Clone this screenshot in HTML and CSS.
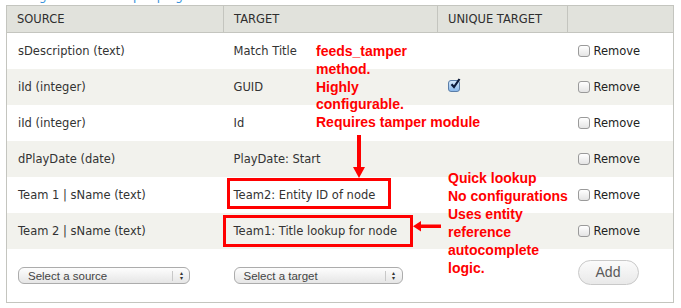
FILE: index.html
```html
<!DOCTYPE html>
<html lang="en">
<head>
  <meta charset="UTF-8" />
  <title>Mapping</title>
  <link rel="stylesheet" href="styles.css">
</head>
<body>
  <div class="page">
    <p class="top-link"><a href="#">Configure Feeds Tamper plugins</a></p>

    <table class="mapping">
      <thead>
        <tr>
          <th class="col-source">SOURCE</th>
          <th class="col-target">TARGET</th>
          <th class="col-unique">UNIQUE TARGET</th>
          <th class="col-remove"></th>
        </tr>
      </thead>
      <tbody>
        <tr>
          <td>sDescription (text)</td>
          <td>Match Title</td>
          <td></td>
          <td><label class="remove"><span class="check"></span>Remove</label></td>
        </tr>
        <tr class="even">
          <td>iId (integer)</td>
          <td>GUID</td>
          <td><span class="check checked"><svg width="12" height="12" viewBox="0 0 12 12"><path d="M2.5 6.2 L5 9 L10.5 1" fill="none" stroke="#0b1a3a" stroke-width="2.2"/></svg></span></td>
          <td><label class="remove"><span class="check"></span>Remove</label></td>
        </tr>
        <tr>
          <td>iId (integer)</td>
          <td>Id</td>
          <td></td>
          <td><label class="remove"><span class="check"></span>Remove</label></td>
        </tr>
        <tr class="even">
          <td>dPlayDate (date)</td>
          <td>PlayDate: Start</td>
          <td></td>
          <td><label class="remove"><span class="check"></span>Remove</label></td>
        </tr>
        <tr>
          <td>Team 1 | sName (text)</td>
          <td>Team2: Entity ID of node</td>
          <td></td>
          <td><label class="remove"><span class="check"></span>Remove</label></td>
        </tr>
        <tr class="even">
          <td>Team 2 | sName (text)</td>
          <td>Team1: Title lookup for node</td>
          <td></td>
          <td><label class="remove"><span class="check"></span>Remove</label></td>
        </tr>
        <tr class="add-row">
          <td><div class="select select-source"><span>Select a source</span><i>&#x25B4;<br>&#x25BE;</i></div></td>
          <td><div class="select select-target"><span>Select a target</span><i>&#x25B4;<br>&#x25BE;</i></div></td>
          <td></td>
          <td><button class="add-btn">Add</button></td>
        </tr>
      </tbody>
    </table>

    <!-- annotations drawn over the screenshot -->
    <div class="note note-tamper">feeds_tamper<br>method.<br>Highly<br>configurable.<br>Requires tamper module</div>
    <div class="note note-lookup">Quick lookup<br>No configurations<br>Uses entity<br>reference<br>autocomplete<br>logic.</div>
    <div class="red-box box-one"></div>
    <div class="red-box box-two"></div>
    <svg class="arrows" width="681" height="308" viewBox="0 0 681 308">
      <rect x="357" y="135" width="4" height="33" fill="#f00"/>
      <polygon points="353,167 365,167 359,178" fill="#f00"/>
      <rect x="420" y="224.5" width="21" height="3.5" fill="#f00"/>
      <polygon points="421,221 421,231.5 413,226.2" fill="#f00"/>
    </svg>
  </div>
</body>
</html>
```

FILE: styles.css
```css
body {
  margin: 0;
  font-family: 'DejaVu Sans', Verdana, sans-serif;
  font-size: 11.5px;
  color: #333;
  background: #fff;
}

.page {
  position: relative;
  width: 681px;
  height: 308px;
  overflow: hidden;
  padding: 5px 0 0 6px;
  box-sizing: border-box;
}

.top-link {
  margin: -15px 0 0 2px;
  height: 15px;
  line-height: 13px;
  font-size: 12px;
}

.top-link a {
  color: #3a93da;
  text-decoration: none;
}

.mapping {
  border-collapse: collapse;
  border: 1px solid #c4c5bf;
  table-layout: fixed;
  width: 668px;
}

.mapping th {
  background: #e1e2dc;
  height: 26px;
  padding: 0 0 0 10px;
  font-weight: normal;
  text-align: left;
  border: 1px solid #c4c5bf;
  color: #2e2e2e;
}

.col-source { width: 206px; }
.col-target { width: 203px; }
.col-unique { width: 119px; }

.mapping td {
  height: 36px;
  padding: 0 0 0 10px;
  white-space: nowrap;
}

.mapping tbody tr.even td {
  background: #f2f2ed;
}

.mapping td:first-child {
  padding-left: 11px;
}

.remove {
  display: flex;
  align-items: center;
  gap: 4px;
  color: #222;
}

.check {
  display: inline-block;
  width: 12px;
  height: 12px;
  border: 1px solid #9a9a9a;
  border-radius: 3px;
  box-sizing: border-box;
  background: linear-gradient(#fff, #e4e4e4);
}

.check.checked {
  position: relative;
  border-color: #5b7ea8;
  background: linear-gradient(#d4e8fb, #8ab8ea);
}

.check.checked svg {
  position: absolute;
  left: 0;
  top: -3px;
}

.add-row td {
  height: 53px;
  background: #fff;
}

.select {
  display: flex;
  align-items: center;
  justify-content: space-between;
  height: 17px;
  border: 1px solid #acacac;
  border-radius: 6px;
  background: linear-gradient(#fdfdfd, #e6e6e6);
  box-sizing: border-box;
  font-family: 'Liberation Sans', Arial, sans-serif;
  font-size: 11.5px;
  color: #444;
  margin-top: 0;
}

.select span {
  padding-left: 9px;
}

.select i {
  font-style: normal;
  font-size: 6px;
  line-height: 5px;
  width: 16px;
  text-align: center;
  border-left: 1px solid #c8c8c8;
  color: #333;
}

.select-source { width: 172px; }
.select-target { width: 169px; }

.add-btn {
  width: 61px;
  height: 25px;
  border: 1px solid #c9c9c9;
  border-radius: 13px;
  background: linear-gradient(#fbfbfb, #e9e9e9);
  font-family: 'Liberation Sans', Arial, sans-serif;
  font-size: 14px;
  color: #5a5a5a;
  padding: 0;
  margin-top: -12px;
}

.note {
  position: absolute;
  font-family: 'Liberation Sans', Arial, sans-serif;
  font-weight: bold;
  font-size: 14px;
  color: #f00;
  white-space: nowrap;
}

.note-tamper {
  left: 316px;
  top: 43px;
  line-height: 17.75px;
}

.note-lookup {
  left: 448px;
  top: 169px;
  line-height: 18px;
}

.red-box {
  position: absolute;
  border: 3px solid #f00;
  box-sizing: border-box;
}

.box-one {
  left: 227px;
  top: 178px;
  width: 164px;
  height: 31px;
}

.box-two {
  left: 223px;
  top: 215px;
  width: 190px;
  height: 32px;
}

.arrows {
  position: absolute;
  left: 0;
  top: 0;
}
```
